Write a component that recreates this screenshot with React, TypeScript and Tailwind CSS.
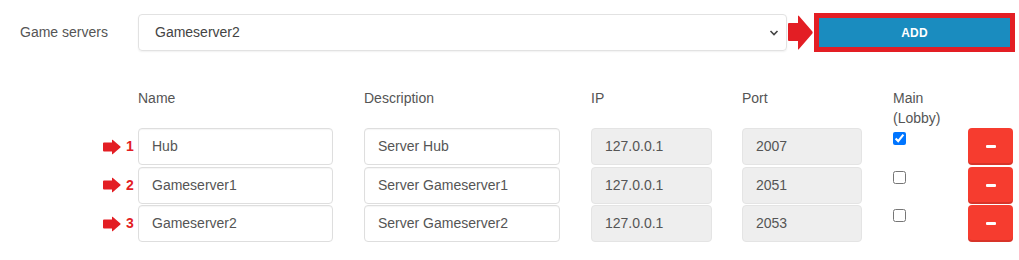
import React from "react";

const rows = [
  { n: "1", name: "Hub", desc: "Server Hub", ip: "127.0.0.1", port: "2007", main: true },
  { n: "2", name: "Gameserver1", desc: "Server Gameserver1", ip: "127.0.0.1", port: "2051", main: false },
  { n: "3", name: "Gameserver2", desc: "Server Gameserver2", ip: "127.0.0.1", port: "2053", main: false },
];

function SmallArrow() {
  return (
    <svg width="19" height="16" viewBox="0 0 19 16" className="block">
      <path d="M1 4.5 Q1 3.5 2 3.5 L10 3.5 L10 1 Q10 0.5 10.6 0.8 L18.4 7.4 Q19 8 18.4 8.6 L10.6 15.2 Q10 15.5 10 15 L10 12.5 L2 12.5 Q1 12.5 1 11.5 Z" fill="#e31e24" />
    </svg>
  );
}

function Field({ value, gray, w }: { value: string; gray?: boolean; w: string }) {
  return (
    <div
      className={`${w} h-[37px] flex items-center pl-[13px] rounded-[4px] border text-[14px] text-[#555] ${
        gray ? "bg-[#eeeeee] border-[#e4e4e4]" : "bg-white border-[#dedede] shadow-[inset_0_1px_1px_rgba(0,0,0,0.04)]"
      }`}
    >
      {value}
    </div>
  );
}

export default function App() {
  return (
    <div className="w-[1019px] h-[260px] bg-white font-['Liberation_Sans',Arial,sans-serif] text-[#555] relative overflow-hidden">
      {/* top row */}
      <div className="flex items-center mt-[13px] h-[39px] pt-0">
        <div className="w-[138px] pl-[20px] text-[14px] text-[#555]">Game servers</div>
        <div className="w-[649px] h-[37px] flex items-center justify-between rounded-[4px] border border-[#e2e2e2] shadow-[0_1px_2px_rgba(0,0,0,0.06)] pl-[16px] pr-[7px] text-[14px] text-[#444]">
          <span>Gameserver2</span>
          <svg width="10" height="8" viewBox="0 0 10 8">
            <path d="M1.5 2 L5 5.5 L8.5 2" stroke="#444" strokeWidth="1.6" fill="none" />
          </svg>
        </div>
        <div className="w-[26px] h-[39px] flex items-center pl-[1px]">
          <svg width="25" height="35" viewBox="0 0 25 35">
            <path d="M0 9 Q0 8 1 8 L10 8 L10 1 Q10 0 11 1 L24.4 16.6 Q25 17.5 24.4 18.4 L11 34 Q10 35 10 34 L10 26 L1 26 Q0 26 0 25 Z" fill="#e31e24" />
          </svg>
        </div>
        <div className="w-[201px] h-[39px] border-[5px] border-[#e31e24] bg-[#1a8cbf] flex items-center justify-center ml-[1px]">
          <span className="text-white font-bold text-[12px] tracking-[0.2px]">ADD</span>
        </div>
      </div>

      {/* headers */}
      <div className="flex mt-[36px] text-[14px] leading-[20px] text-[#555]">
        <div className="w-[138px]" />
        <div className="w-[226px]">Name</div>
        <div className="w-[227px]">Description</div>
        <div className="w-[151px]">IP</div>
        <div className="w-[151px]">Port</div>
        <div className="w-[75px]">
          Main
          <br />
          (Lobby)
        </div>
      </div>

      {/* rows */}
      <div className="flex flex-col gap-[1.5px]">
        {rows.map((r) => (
          <div key={r.n} className="flex h-[37px]">
            <div className="w-[138px] flex items-center justify-end pr-[4px] gap-[5px]">
              <SmallArrow />
              <span className="text-[#e31e24] font-bold text-[14px] w-[8px]">{r.n}</span>
            </div>
            <div className="w-[226px]">
              <Field value={r.name} w="w-[195px]" />
            </div>
            <div className="w-[227px]">
              <Field value={r.desc} w="w-[196px]" />
            </div>
            <div className="w-[151px]">
              <Field value={r.ip} gray w="w-[121px]" />
            </div>
            <div className="w-[151px]">
              <Field value={r.port} gray w="w-[120px]" />
            </div>
            <div className="w-[75px] pt-[4px]">
              <input
                type="checkbox"
                defaultChecked={r.main}
                className="w-[13px] h-[13px] m-0 block accent-[#0075ff]"
              />
            </div>
            <div className="w-[45px] h-[37px] rounded-[4px] bg-[#f63c2f] shadow-[inset_0_-2px_0_rgba(0,0,0,0.12)] flex items-center justify-center">
              <div className="w-[10px] h-[3px] bg-white rounded-[1px]" />
            </div>
          </div>
        ))}
      </div>
    </div>
  );
}
